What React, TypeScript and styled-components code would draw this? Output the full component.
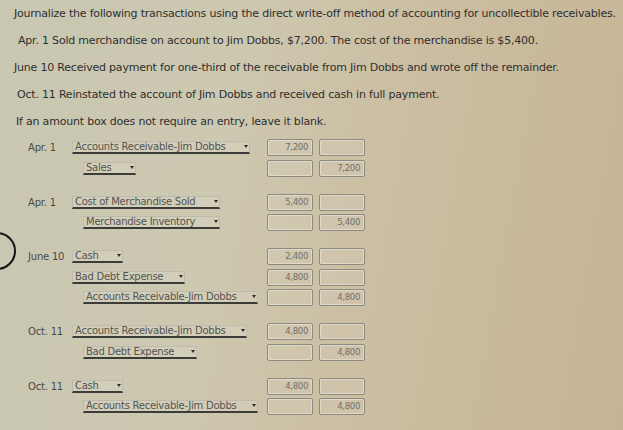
import React from "react";
import { createGlobalStyle, styled } from "styled-components";

// Data
const instructions = [
  { text: "Journalize the following transactions using the direct write-off method of accounting for uncollectible receivables.", indent: 0 },
  { text: "Apr. 1 Sold merchandise on account to Jim Dobbs, $7,200. The cost of the merchandise is $5,400.", indent: 4 },
  { text: "June 10 Received payment for one-third of the receivable from Jim Dobbs and wrote off the remainder.", indent: 0 },
  { text: "Oct. 11 Reinstated the account of Jim Dobbs and received cash in full payment.", indent: 3 },
  { text: "If an amount box does not require an entry, leave it blank.", indent: 2 },
];

interface Line {
  account: string;
  width: number;
  credit?: boolean;
  amount: string;
}

interface Entry {
  date: string;
  lines: Line[];
}

const entries: Entry[] = [
  {
    date: "Apr. 1",
    lines: [
      { account: "Accounts Receivable-Jim Dobbs", width: 178, amount: "7,200" },
      { account: "Sales", width: 53, credit: true, amount: "7,200" },
    ],
  },
  {
    date: "Apr. 1",
    lines: [
      { account: "Cost of Merchandise Sold", width: 148, amount: "5,400" },
      { account: "Merchandise Inventory", width: 137, credit: true, amount: "5,400" },
    ],
  },
  {
    date: "June 10",
    lines: [
      { account: "Cash", width: 51, amount: "2,400" },
      { account: "Bad Debt Expense", width: 113, amount: "4,800" },
      { account: "Accounts Receivable-Jim Dobbs", width: 175, credit: true, amount: "4,800" },
    ],
  },
  {
    date: "Oct. 11",
    lines: [
      { account: "Accounts Receivable-Jim Dobbs", width: 175, amount: "4,800" },
      { account: "Bad Debt Expense", width: 114, credit: true, amount: "4,800" },
    ],
  },
  {
    date: "Oct. 11",
    lines: [
      { account: "Cash", width: 51, amount: "4,800" },
      { account: "Accounts Receivable-Jim Dobbs", width: 175, credit: true, amount: "4,800" },
    ],
  },
];

export default function App() {
  return (
    <>
      <GlobalStyle />
      <Page>
        <Instructions>
          {instructions.map((item, i) => (
            <Paragraph key={i} $indent={item.indent}>
              {item.text}
            </Paragraph>
          ))}
        </Instructions>

        <Journal>
          {entries.map((entry, i) => (
            <EntryGroup key={i}>
              {entry.lines.map((line, j) => (
                <Row key={j}>
                  <DateCell>{j === 0 ? entry.date : ""}</DateCell>
                  <AccountCell>
                    <AccountSelect $indent={line.credit ? 11 : 0} $width={line.width}>
                      <span>{line.account}</span>
                      <Caret />
                    </AccountSelect>
                  </AccountCell>
                  <Amounts>
                    <AmountBox>{line.credit ? "" : line.amount}</AmountBox>
                    <AmountBox>{line.credit ? line.amount : ""}</AmountBox>
                  </Amounts>
                </Row>
              ))}
            </EntryGroup>
          ))}
        </Journal>

        <Ring />
      </Page>
    </>
  );
}

const GlobalStyle = createGlobalStyle`
  html, body {
    margin: 0;
    padding: 0;
  }
  body {
    width: 623px;
    height: 430px;
    overflow: hidden;
    background: linear-gradient(
      100deg,
      #c9c7b2 0%,
      #cdc8b0 35%,
      #cbbea2 60%,
      #c7b495 100%
    );
    font-family: "DejaVu Sans", Verdana, sans-serif;
  }
`;

const Page = styled.div`
  position: relative;
  height: 430px;
  padding: 7px 0 0 14px;
  box-sizing: border-box;
`;

const Instructions = styled.div`
  display: flex;
  flex-direction: column;
  gap: 13px;
`;

const Paragraph = styled.p<{ $indent: number }>`
  margin: 0 0 0 ${(p) => p.$indent}px;
  font-size: 11px;
  letter-spacing: -0.2px;
  line-height: 14px;
  color: #2f2f2d;
  white-space: nowrap;
`;

const Journal = styled.div`
  display: flex;
  flex-direction: column;
  gap: 17px;
  margin-top: 10px;
`;

const EntryGroup = styled.div`
  display: flex;
  flex-direction: column;
  gap: 3.5px;
`;

const Row = styled.div`
  display: flex;
  align-items: center;
  height: 17px;
`;

const DateCell = styled.div`
  width: 44px;
  padding-left: 14px;
  font-size: 10px;
  letter-spacing: -0.2px;
  color: #4a4a46;
  white-space: nowrap;
`;

const AccountCell = styled.div`
  width: 195px;
  display: flex;
`;

const AccountSelect = styled.div<{ $indent: number; $width: number }>`
  position: relative;
  margin-left: ${(p) => p.$indent}px;
  width: ${(p) => p.$width}px;
  height: 13px;
  box-sizing: border-box;
  padding-left: 2px;
  background: rgba(255, 255, 255, 0.12);
  border: 1px solid #bdbbad;
  border-bottom: 2px solid #3b3b38;
  font-size: 10px;
  letter-spacing: -0.25px;
  line-height: 10px;
  color: #545450;
  white-space: nowrap;
`;

const Caret = styled.span`
  position: absolute;
  right: 1px;
  top: 3px;
  width: 0;
  height: 0;
  border-left: 2.5px solid transparent;
  border-right: 2.5px solid transparent;
  border-top: 3px solid #2a2a28;
`;

const Amounts = styled.div`
  display: flex;
  gap: 6px;
`;

const AmountBox = styled.div`
  width: 46px;
  height: 17px;
  box-sizing: border-box;
  padding-right: 4px;
  border: 1px solid #8c8b80;
  border-radius: 2px;
  box-shadow: inset 0 0 0 1px rgba(255, 255, 255, 0.35);
  background: rgba(255, 255, 255, 0.08);
  font-size: 8.5px;
  line-height: 15px;
  letter-spacing: -0.3px;
  text-align: right;
  color: #6f6f6a;
`;

const Ring = styled.div`
  position: absolute;
  left: -22px;
  top: 232px;
  width: 34px;
  height: 34px;
  border: 2.5px solid #151515;
  border-radius: 50%;
`;
